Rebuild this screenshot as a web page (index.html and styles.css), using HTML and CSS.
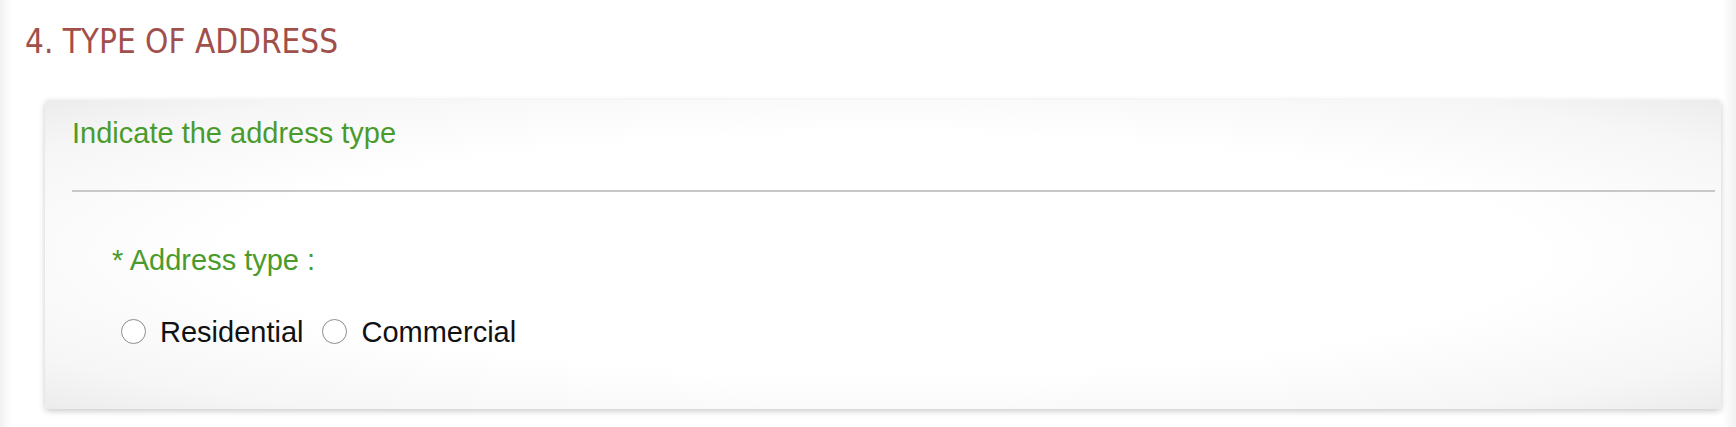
FILE: index.html
```html
<!DOCTYPE html>
<html lang="en">
<head>
    <meta charset="UTF-8">
    <meta name="viewport" content="width=device-width, initial-scale=1.0">
    <title>Type of address</title>
    <link rel="stylesheet" href="styles.css">
</head>
<body>
    <div class="pagina">
        <h2 class="titulo-secao">4. TYPE OF ADDRESS</h2>

        <div class="cartao">
            <h3 class="cartao-titulo">Indicate the address type</h3>
            <hr class="separador">

            <div class="campo">
                <div class="campo-label">* Address type :</div>
                <div class="opcoes">
                    <label class="opcao">
                        <input type="radio" name="tipoEndereco" value="residential">
                        <span>Residential</span>
                    </label>
                    <label class="opcao">
                        <input type="radio" name="tipoEndereco" value="commercial">
                        <span>Commercial</span>
                    </label>
                </div>
            </div>
        </div>
    </div>
</body>
</html>
```

FILE: styles.css
```css
html, body {
    height: 100%;
}

body {
    margin: 0;
    padding: 0;
    font-family: "Liberation Sans", Arial, sans-serif;
    color: #111;
    background: linear-gradient(to right, #f1f1f1 0, #fff 11px, #fff calc(100% - 13px), #f1f1f1 100%);
}

.pagina {
    padding: 22px 15px 0 25px;
}

.titulo-secao {
    margin: 0 0 38px 0;
    font-family: "DejaVu Sans Condensed", "Liberation Sans Narrow", sans-serif;
    font-size: 33px;
    line-height: 40px;
    font-weight: normal;
    color: #a14f4b;
}

.cartao {
    margin-left: 20px;
    padding: 16px 6px 60px 27px;
    border-radius: 4px;
    background: radial-gradient(ellipse at center, #fff 55%, #f6f6f6 85%, #ececec 100%);
    box-shadow: 0 2px 6px rgba(0,0,0,0.22);
}

.cartao-titulo {
    margin: 0;
    font-size: 29px;
    line-height: 34px;
    font-weight: normal;
    color: #4b9b2c;
}

.separador {
    margin: 40px 0 0 0;
    border: none;
    height: 2px;
    background-color: #c8c8c8;
}

.campo {
    padding: 51px 0 0 40px;
}

.campo-label {
    font-size: 29px;
    line-height: 34px;
    color: #4b9b2c;
}

.opcoes {
    display: flex;
    align-items: center;
    gap: 19px;
    margin-top: 38px;
    padding-left: 9px;
}

.opcao {
    display: flex;
    align-items: center;
    gap: 14px;
    font-size: 29px;
    line-height: 34px;
    cursor: pointer;
}

.opcao input[type="radio"] {
    appearance: none;
    -webkit-appearance: none;
    margin: 0;
    width: 25px;
    height: 25px;
    border: 1.5px solid #8c8c8c;
    border-radius: 50%;
    background-color: #fff;
    box-sizing: border-box;
    position: relative;
    top: -1px;
}

.opcao input[type="radio"]:checked {
    background: radial-gradient(circle, #333 0 5px, #fff 6px);
}
```
